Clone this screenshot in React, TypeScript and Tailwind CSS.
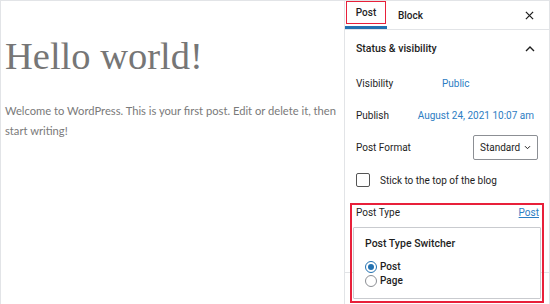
import React from 'react';

const sans = { fontFamily: 'Roboto, "Liberation Sans", sans-serif' };

function Row({ label, children, className = '' }: { label: string; children?: React.ReactNode; className?: string }) {
  return (
    <div className={`flex items-center h-[32px] ${className}`}>
      <span className="w-[86px] shrink-0">{label}</span>
      {children}
    </div>
  );
}

export default function App() {
  return (
    <div className="w-[550px] h-[304px] flex bg-white border-t border-l border-r border-[#e2e4e7] overflow-hidden">
      {/* editor canvas */}
      <main className="w-[343px] shrink-0 pl-[4px]">
        <h1
          className="mt-[36px] text-[38.5px] leading-[39px] text-[#767676]"
          style={{ fontFamily: '"Liberation Serif", serif' }}
        >
          Hello world!
        </h1>
        <p
          className="mt-[25px] w-[334px] text-[11.2px] leading-[20px] text-[#7a7a7a]"
          style={{ fontFamily: 'Lato, sans-serif' }}
        >
          Welcome to WordPress. This is your first post. Edit or delete it, then start writing!
        </p>
      </main>

      {/* settings sidebar */}
      <aside className="relative w-[205px] shrink-0 min-w-0 flex flex-col border-l border-[#e2e4e7] text-[10px] text-[#1e1e1e]" style={sans}>
        <div className="h-[29px] shrink-0 flex items-stretch border-b border-[#e2e4e7]">
          <div className="relative w-[42px] flex items-center justify-center font-medium border-b-[3px] border-[#2271b1]">
            <span className="-mt-[2px]">Post</span>
            <div className="absolute left-[1px] top-0 w-[40px] h-[23px] border border-[#e8203a]" />
          </div>
          <div className="flex items-center pl-[11px] font-medium">Block</div>
          <div className="ml-auto flex items-center pr-[15px]">
            <svg width="9" height="9" viewBox="0 0 10 10" fill="none" stroke="#1e1e1e" strokeWidth="1.4">
              <path d="M1 1l8 8M9 1l-8 8" />
            </svg>
          </div>
        </div>

        <div className="px-[11px]">
          <div className="h-[37px] flex items-center justify-between font-medium text-[10.5px]">
            <span>Status &amp; visibility</span>
            <svg width="10" height="6" viewBox="0 0 10 6" fill="none" stroke="#1e1e1e" strokeWidth="1.4" className="mr-[3px]">
              <path d="M1 5l4-4 4 4" />
            </svg>
          </div>
          <Row label="Visibility">
            <span className="text-[#2c7dc3]">Public</span>
          </Row>
          <div className="flex items-center justify-between h-[32px]">
            <span>Publish</span>
            <span className="mr-[4px] whitespace-nowrap text-[#2c7dc3]">August 24, 2021 10:07 am</span>
          </div>
          <div className="flex items-center justify-between h-[32px]">
            <span>Post Format</span>
            <div className="h-[25px] w-[65px] flex items-center justify-between pl-[6px] pr-[6px] border border-[#8c8f94] rounded-[2px]">
              <span>Standard</span>
              <svg width="7" height="5" viewBox="0 0 7 5" fill="none" stroke="#1e1e1e" strokeWidth="1">
                <path d="M1 1.2l2.5 2.5L6 1.2" />
              </svg>
            </div>
          </div>
          <div className="h-[34px] flex items-center gap-[10px]">
            <span className="w-[14px] h-[14px] border border-[#555] rounded-[2px]" />
            <span>Stick to the top of the blog</span>
          </div>
        </div>

        <div className="mt-[3px] h-[73px] shrink-0 border-b border-[#e2e4e7] px-[11px] pt-[5px] flex justify-between">
          <span>Post Type</span>
          <span className="mr-[-1px] text-[#2c7dc3] underline">Post</span>
        </div>

        {/* post type popover */}
        <div className="absolute left-[8px] top-[226px] w-[188px] h-[72px] bg-white border border-[#c9cbcf] rounded-[1px] pl-[11px] pt-[9px]">
          <div className="font-medium text-[10.5px] leading-[14px]">Post Type Switcher</div>
          <label className="mt-[9px] flex items-center gap-[3px] font-medium leading-[13px]">
            <span className="w-[12px] h-[12px] rounded-full border-[1.5px] border-[#2271b1] flex items-center justify-center">
              <span className="w-[6px] h-[6px] rounded-full bg-[#2271b1]" />
            </span>
            Post
          </label>
          <label className="mt-[1px] flex items-center gap-[3px] font-medium leading-[13px]">
            <span className="w-[12px] h-[12px] rounded-full border border-[#8c8f94]" />
            Page
          </label>
        </div>

        {/* annotation */}
        <div className="absolute left-[5px] top-[202px] w-[194px] h-[100px] border-2 border-[#e8203a]" />
      </aside>
    </div>
  );
}
